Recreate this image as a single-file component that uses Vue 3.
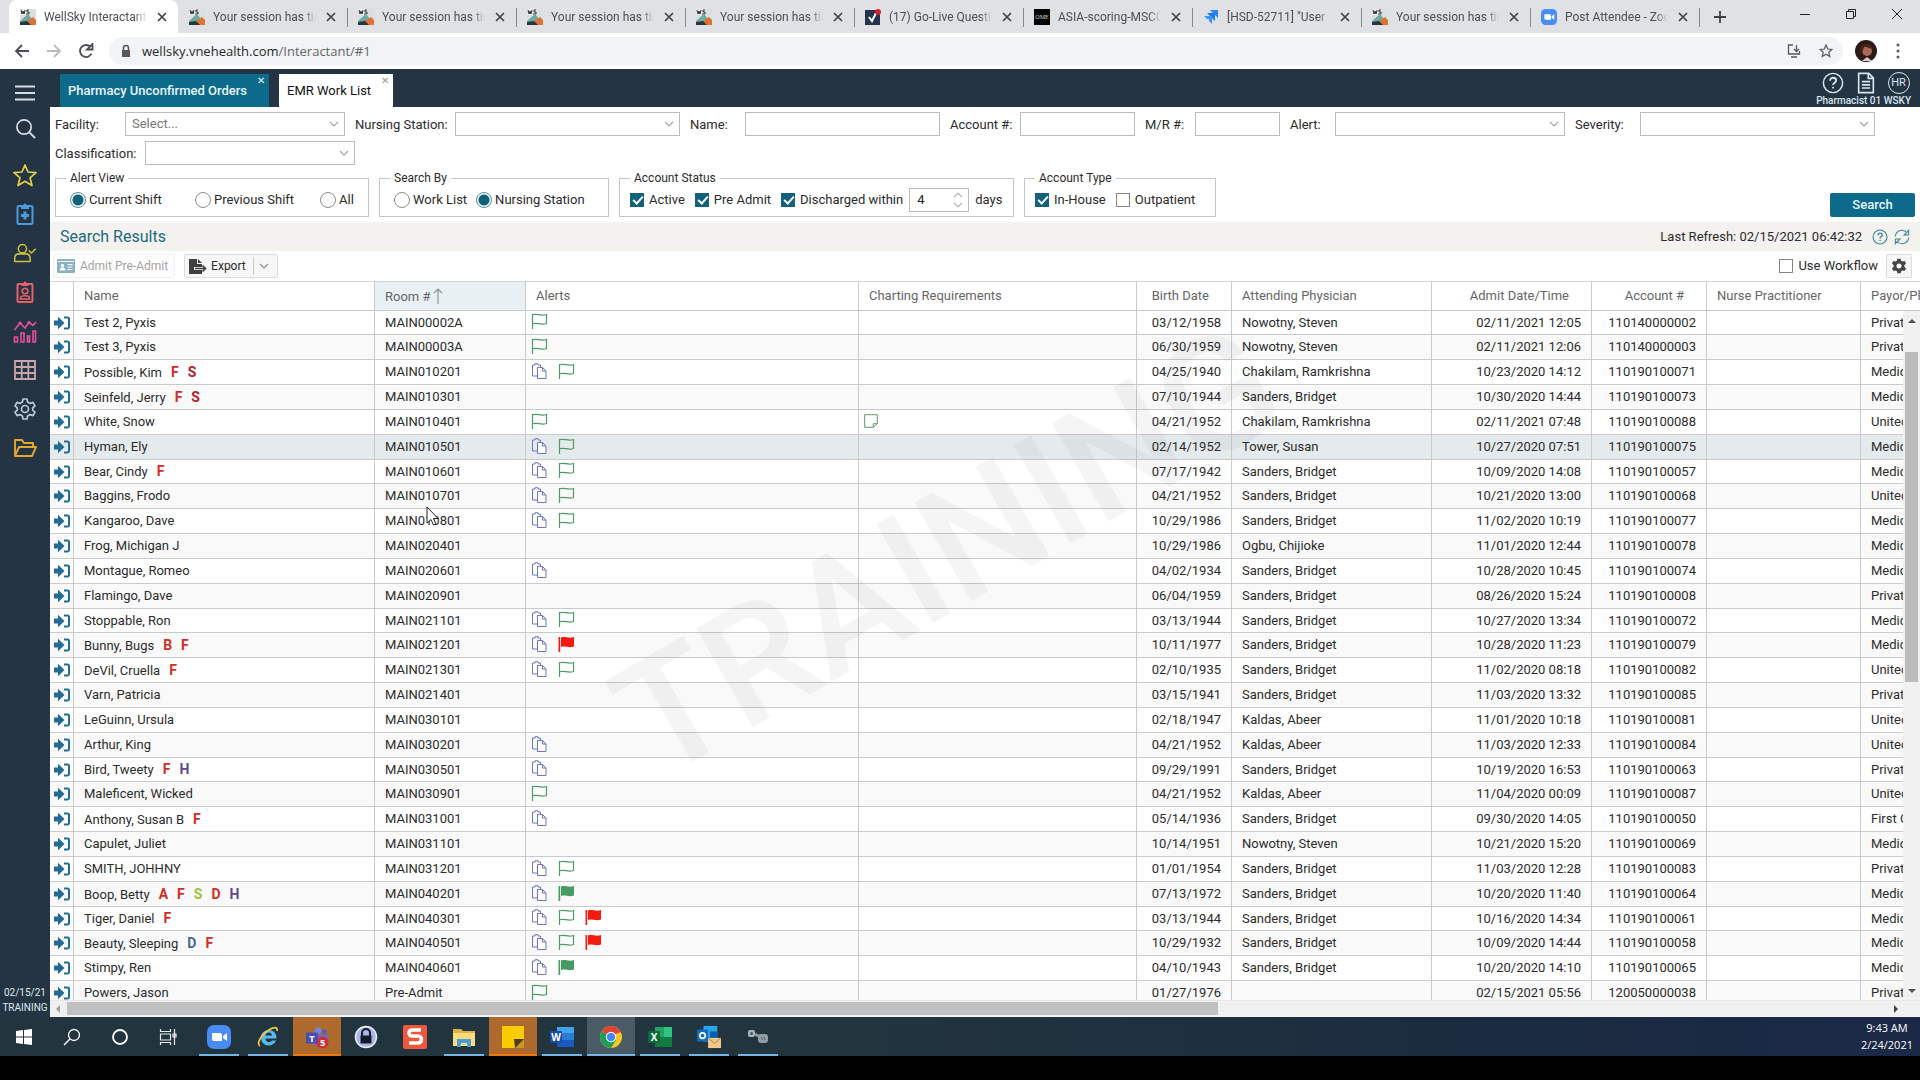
<script setup>
import { ref } from 'vue'

const browserTabs = [
  { icon: 'wellsky', title: 'WellSky Interactant' },
  { icon: 'wellsky', title: 'Your session has timed out' },
  { icon: 'wellsky', title: 'Your session has timed out' },
  { icon: 'wellsky', title: 'Your session has timed out' },
  { icon: 'wellsky', title: 'Your session has timed out' },
  { icon: 'golive', title: '(17) Go-Live Questions' },
  { icon: 'ome', title: 'ASIA-scoring-MSCOE' },
  { icon: 'jira', title: '[HSD-52711] "User' },
  { icon: 'wellsky', title: 'Your session has timed out' },
  { icon: 'zoom', title: 'Post Attendee - Zoom' },
]

const navItems = [
  { icon: 'star', label: 'Favorites', tone: 'yellow' },
  { icon: 'clipboard', label: 'Orders', tone: 'blue' },
  { icon: 'person', label: 'Patients', tone: 'olive' },
  { icon: 'badge', label: 'Census', tone: 'red' },
  { icon: 'chart', label: 'Reports', tone: 'pink' },
  { icon: 'grid', label: 'Grid', tone: 'rose' },
  { icon: 'gear', label: 'Settings', tone: 'pale' },
  { icon: 'folder', label: 'Files', tone: 'orange' },
]

const alertView = ref('Current Shift')
const searchBy = ref('Nursing Station')
const active = ref(true)
const preAdmit = ref(true)
const discharged = ref(true)
const days = ref(4)
const inHouse = ref(true)
const outpatient = ref(false)
const workflow = ref(false)

// name, marker letters with tone, room, alert icons, birth date, physician, admitted, account, payor
const rows = [
  ['Test 2, Pyxis', '', 'MAIN00002A', 'f', '03/12/1958', 'Nowotny, Steven', '02/11/2021 12:05', '110140000002', 'Private'],
  ['Test 3, Pyxis', '', 'MAIN00003A', 'f', '06/30/1959', 'Nowotny, Steven', '02/11/2021 12:06', '110140000003', 'Private'],
  ['Possible, Kim', 'Fr Sc', 'MAIN010201', 'cf', '04/25/1940', 'Chakilam, Ramkrishna', '10/23/2020 14:12', '110190100071', 'Medicare'],
  ['Seinfeld, Jerry', 'Fr Sc', 'MAIN010301', '', '07/10/1944', 'Sanders, Bridget', '10/30/2020 14:44', '110190100073', 'Medicare'],
  ['White, Snow', '', 'MAIN010401', 'f', '04/21/1952', 'Chakilam, Ramkrishna', '02/11/2021 07:48', '110190100088', 'United'],
  ['Hyman, Ely', '', 'MAIN010501', 'cf', '02/14/1952', 'Tower, Susan', '10/27/2020 07:51', '110190100075', 'Medicare'],
  ['Bear, Cindy', 'Fr', 'MAIN010601', 'cf', '07/17/1942', 'Sanders, Bridget', '10/09/2020 14:08', '110190100057', 'Medicare'],
  ['Baggins, Frodo', '', 'MAIN010701', 'cf', '04/21/1952', 'Sanders, Bridget', '10/21/2020 13:00', '110190100068', 'United'],
  ['Kangaroo, Dave', '', 'MAIN010801', 'cf', '10/29/1986', 'Sanders, Bridget', '11/02/2020 10:19', '110190100077', 'Medicare'],
  ['Frog, Michigan J', '', 'MAIN020401', '', '10/29/1986', 'Ogbu, Chijioke', '11/01/2020 12:44', '110190100078', 'Medicare'],
  ['Montague, Romeo', '', 'MAIN020601', 'c', '04/02/1934', 'Sanders, Bridget', '10/28/2020 10:45', '110190100074', 'Medicare'],
  ['Flamingo, Dave', '', 'MAIN020901', '', '06/04/1959', 'Sanders, Bridget', '08/26/2020 15:24', '110190100008', 'Private'],
  ['Stoppable, Ron', '', 'MAIN021101', 'cf', '03/13/1944', 'Sanders, Bridget', '10/27/2020 13:34', '110190100072', 'Medicare'],
  ['Bunny, Bugs', 'Br Fr', 'MAIN021201', 'cr', '10/11/1977', 'Sanders, Bridget', '10/28/2020 11:23', '110190100079', 'Medicare'],
  ['DeVil, Cruella', 'Fr', 'MAIN021301', 'cf', '02/10/1935', 'Sanders, Bridget', '11/02/2020 08:18', '110190100082', 'United'],
  ['Varn, Patricia', '', 'MAIN021401', '', '03/15/1941', 'Sanders, Bridget', '11/03/2020 13:32', '110190100085', 'Private'],
  ['LeGuinn, Ursula', '', 'MAIN030101', '', '02/18/1947', 'Kaldas, Abeer', '11/01/2020 10:18', '110190100081', 'United'],
  ['Arthur, King', '', 'MAIN030201', 'c', '04/21/1952', 'Kaldas, Abeer', '11/03/2020 12:33', '110190100084', 'United'],
  ['Bird, Tweety', 'Fr Hp', 'MAIN030501', 'c', '09/29/1991', 'Sanders, Bridget', '10/19/2020 16:53', '110190100063', 'Private'],
  ['Maleficent, Wicked', '', 'MAIN030901', 'f', '04/21/1952', 'Kaldas, Abeer', '11/04/2020 00:09', '110190100087', 'United'],
  ['Anthony, Susan B', 'Fr', 'MAIN031001', 'c', '05/14/1936', 'Sanders, Bridget', '09/30/2020 14:05', '110190100050', 'First C'],
  ['Capulet, Juliet', '', 'MAIN031101', '', '10/14/1951', 'Nowotny, Steven', '10/21/2020 15:20', '110190100069', 'Medicare'],
  ['SMITH, JOHHNY', '', 'MAIN031201', 'cf', '01/01/1954', 'Sanders, Bridget', '11/03/2020 12:28', '110190100083', 'Private'],
  ['Boop, Betty', 'Ar Fr Sg Dr Hp', 'MAIN040201', 'cg', '07/13/1972', 'Sanders, Bridget', '10/20/2020 11:40', '110190100064', 'Medicare'],
  ['Tiger, Daniel', 'Fr', 'MAIN040301', 'cfr', '03/13/1944', 'Sanders, Bridget', '10/16/2020 14:34', '110190100061', 'Medicare'],
  ['Beauty, Sleeping', 'Db Fr', 'MAIN040501', 'cfr', '10/29/1932', 'Sanders, Bridget', '10/09/2020 14:44', '110190100058', 'Medicare'],
  ['Stimpy, Ren', '', 'MAIN040601', 'cg', '04/10/1943', 'Sanders, Bridget', '10/20/2020 14:10', '110190100065', 'Medicare'],
  ['Powers, Jason', '', 'Pre-Admit', 'f', '01/27/1976', '', '02/15/2021 05:56', '120050000038', 'Private'],
].map(([name, marks, room, alerts, birth, physician, admitted, account, payor]) => ({
  name,
  marks: marks ? marks.split(' ') : [],
  room,
  alerts: [...alerts],
  note: name === 'White, Snow',
  birth,
  physician,
  admitted,
  account,
  payor,
}))

const alertIcons = { c: 'copy', f: 'flag', r: 'flag-red', g: 'flag-green' }

const systemButtons = [
  { icon: 'windows', label: 'Start' },
  { icon: 'find', label: 'Search Windows' },
  { icon: 'cortana', label: 'Cortana' },
  { icon: 'taskview', label: 'Task View' },
]
const taskbarApps = [
  { icon: 'zoom', label: 'Zoom', state: 'open' },
  { icon: 'ie', label: 'Internet Explorer', state: 'open' },
  { icon: 'teams', label: 'Teams', state: 'alerting' },
  { icon: 'lock-app', label: 'Password Vault', state: '' },
  { icon: 'snagit', label: 'Snagit', state: '' },
  { icon: 'explorer', label: 'File Explorer', state: 'open' },
  { icon: 'sticky', label: 'Sticky Notes', state: 'alerting' },
  { icon: 'word', label: 'Word', state: 'open' },
  { icon: 'chrome', label: 'Chrome', state: 'current' },
  { icon: 'excel', label: 'Excel', state: 'open' },
  { icon: 'outlook', label: 'Outlook', state: 'open' },
  { icon: 'audio', label: 'Audio', state: 'open' },
]
</script>

<template>
  <div class="screen">
    <svg class="sprite" aria-hidden="true">
      <symbol id="wellsky" viewBox="0 0 16 16">
        <rect width="16" height="16" fill="#d9e0df" />
        <path d="M0 0h9v6H0z" fill="#e8eae8" />
        <path d="M1 1l1 4 1-3 1 3 1-4M9 1H7v2h2v2H6" fill="none" stroke="#333" />
        <path d="M0 12l8-7 4 5v6H0z" fill="#6fa9a4" />
        <path d="M7 12l6-4 3 3v5H6z" fill="#dd7433" />
        <path d="M0 13l7-1 4 4H0z" fill="#243642" />
      </symbol>
      <symbol id="golive" viewBox="0 0 16 16">
        <path d="M0 1h15v15H0z" fill="#26334f" />
        <path d="M4 8l3 4 4-8" fill="none" stroke="#fff" stroke-width="2" />
        <circle cx="13" cy="3" r="3" fill="#d5202b" />
      </symbol>
      <symbol id="ome" viewBox="0 0 16 16">
        <rect width="16" height="16" fill="#000" />
        <text x="8" y="10" font-size="6" fill="#ddd" text-anchor="middle" font-family="Liberation Serif, serif">OME</text>
      </symbol>
      <symbol id="jira" viewBox="0 0 16 16">
        <path d="M7 1h8v8l-3-3V4H10z" fill="#2684ff" />
        <path d="M4 4h8v8L9 9V7H7z" fill="#1f78f0" />
        <path d="M1 7h8v8l-3-3v-2H4z" fill="#3d93ff" />
      </symbol>
      <symbol id="zoom" viewBox="0 0 24 24">
        <rect width="24" height="24" rx="7" fill="#4a8cf7" />
        <path d="M5 8h8a2 2 0 0 1 2 2v6H7a2 2 0 0 1-2-2zM16 11l4-3v8l-4-3z" fill="#fff" />
      </symbol>
      <symbol id="star" viewBox="0 0 24 24">
        <path d="M12 2l3 7 8 .6-6 5.2 2 7.7-7-4.200-7 4.200 2-7.700L1 9.600 9 9z" fill="none" stroke="currentColor" stroke-width="1.700" stroke-linejoin="round" />
      </symbol>
      <symbol id="clipboard" viewBox="0 0 24 24">
        <rect x="4.500" y="4" width="15" height="18" rx="1.500" fill="none" stroke="currentColor" stroke-width="2" />
        <path d="M8 3h2.500a1.500 1.500 0 0 1 3 0H16v4H8z" fill="currentColor" />
        <path d="M12 9.500v8M8 13.500h8" stroke="currentColor" stroke-width="3" />
      </symbol>
      <symbol id="person" viewBox="0 0 28 24">
        <circle cx="11" cy="7" r="4.800" fill="none" stroke="currentColor" stroke-width="1.800" />
        <path d="M2 22v-4c0-3 2-5 5-5h8c3 0 5 2 5 5v4zM18.500 9l3 3 5-5" fill="none" stroke="currentColor" stroke-width="1.800" stroke-linejoin="round" />
      </symbol>
      <symbol id="badge" viewBox="0 0 24 24">
        <rect x="4.500" y="4" width="15" height="18" rx="1" fill="none" stroke="currentColor" stroke-width="2" />
        <path d="M8.500 3h2a1.500 1.500 0 0 1 3 0h2v3h-7z" fill="currentColor" />
        <circle cx="12" cy="11" r="2.800" fill="none" stroke="currentColor" stroke-width="1.600" />
        <path d="M7.500 19v-1c0-3 9-3 9 0v1z" fill="none" stroke="currentColor" stroke-width="1.600" />
      </symbol>
      <symbol id="chart" viewBox="0 0 24 24">
        <path d="M1.500 11L7 4l5 5 4-5.500 4 3L23 3" fill="none" stroke="currentColor" stroke-width="1.600" />
        <path d="M1.500 18h3v5h-3zM8 14h3v9H8zM14.500 17h2v6h-2zM20 12h2.500v11H20z" fill="none" stroke="currentColor" stroke-width="1.600" />
        <circle cx="7" cy="4" r="1.600" fill="currentColor" /><circle cx="16" cy="3.500" r="1.600" fill="currentColor" />
      </symbol>
      <symbol id="grid" viewBox="0 0 24 24">
        <path d="M2 3h20v18H2zM2 9h20M2 15h20M8.700 3v18M15.300 3v18" fill="none" stroke="currentColor" stroke-width="1.800" />
      </symbol>
      <symbol id="gear" viewBox="0 0 24 24">
        <path d="M10 2h4l.6 3 2.500 1.400 2.900-1 2 3.500-2.300 2v2.200l2.300 2-2 3.500-2.900-1L14.600 19l-.6 3h-4l-.6-3-2.500-1.400-2.900 1-2-3.500 2.300-2v-2.200l-2.300-2 2-3.500 2.900 1L9.400 5z" fill="none" stroke="currentColor" stroke-width="1.700" stroke-linejoin="round" />
        <circle cx="12" cy="12" r="3.500" fill="none" stroke="currentColor" stroke-width="1.700" />
      </symbol>
      <symbol id="folder" viewBox="0 0 24 24">
        <path d="M2 20V4h7l2 3h9v4M2 20l4-9h17l-4 9z" fill="none" stroke="currentColor" stroke-width="1.900" stroke-linejoin="round" />
      </symbol>
      <symbol id="gear-solid" viewBox="0 0 24 24">
        <path fill-rule="evenodd" d="M9.500 1h5l.6 3.200 2 1.200 3.200-1 2.300 4L20 10.700v2.600l2.600 2.300-2.300 4-3.200-1-2 1.200-.6 3.200h-5l-.6-3.200-2-1.200-3.200 1-2.300-4L4 13.300v-2.600L1.400 8.400l2.300-4 3.200 1 2-1.200zM12 8.200a3.800 3.800 0 1 0 0 7.600 3.800 3.800 0 0 0 0-7.600z" fill="currentColor" />
      </symbol>
      <symbol id="help" viewBox="0 0 24 24">
        <circle cx="12" cy="12" r="10.500" fill="none" stroke="currentColor" stroke-width="1.600" />
        <path d="M8.800 9.500c0-4.500 6.600-4 6.600-.3 0 2.600-3.300 2.500-3.300 5M12.100 16v2" fill="none" stroke="currentColor" stroke-width="2" />
      </symbol>
      <symbol id="document" viewBox="0 0 20 24">
        <path d="M2 1.500h11l5 5v16H2zM12.500 1.500V7H18M5.500 10.500h9M5.500 14h9M5.500 17.500h9" fill="none" stroke="currentColor" stroke-width="1.800" />
      </symbol>
      <symbol id="refresh" viewBox="0 0 24 24">
        <path d="M2 11a10 10 0 0 1 18-5M22 13a10 10 0 0 1-18 5M22 2v7h-7zM2 22v-7h7z" fill="none" stroke="currentColor" stroke-width="1.600" />
      </symbol>
      <symbol id="chevron" viewBox="0 0 10 10">
        <path d="M1 3l4 4 4-4" fill="none" stroke="currentColor" stroke-width="1.200" />
      </symbol>
      <symbol id="card" viewBox="0 0 18 14">
        <rect width="18" height="14" rx="1" fill="currentColor" />
        <path d="M1 2.500h16M3 11c0-3 5-3 5 0zM10.500 5.500h5M10.500 8h5M10.500 10.500h5" stroke="#fff" fill="#fff" />
        <circle cx="5.500" cy="6.500" r="1.700" fill="#fff" />
      </symbol>
      <symbol id="export" viewBox="0 0 19 17">
        <path d="M1 1h8v5h5v3H6v3h8v4H1zM10 1l4 4h-4z" fill="currentColor" />
        <path d="M7 10.500h10M14.500 7.500l3 3-3 3" fill="none" stroke="currentColor" stroke-width="1.700" />
      </symbol>
      <symbol id="enter" viewBox="0 0 16 14">
        <path d="M0 4.500h4V.800L10.500 7 4 13.200V9.500H0z" fill="currentColor" />
        <path d="M10 1.500h3.500a1.500 1.500 0 0 1 1.500 1.500v8a1.500 1.500 0 0 1-1.500 1.500H10" fill="none" stroke="currentColor" stroke-width="2" />
      </symbol>
      <symbol id="copy" viewBox="0 0 16 16">
        <path d="M5.500 13H1V2h2.500V.700H6.500V2H9v2" fill="none" stroke="#6f76c0" />
        <path d="M6 4.500h5l3.500 3.500v7.500H6zM11 4.500V8h3.500" fill="#fff" stroke="#6f76c0" />
      </symbol>
      <symbol id="flag" viewBox="0 0 17 16">
        <path d="M1.500 1v15M1.500 1.800c5-2 8 2 14-.3v9c-6 2.300-9-1.700-14 .3" fill="none" stroke="#4f9a68" stroke-width="1.200" />
      </symbol>
      <symbol id="flag-red" viewBox="0 0 17 16">
        <path d="M3 1.500c4-1.500 8 1.500 13-.5v9.500c-5 2-9-1-13 .5zM.500 1h1.700v15H.500z" fill="#f31b10" />
      </symbol>
      <symbol id="flag-green" viewBox="0 0 17 16">
        <path d="M3 1.500c4-1.500 8 1.500 13-.5v9.500c-5 2-9-1-13 .5zM.500 1h1.700v15H.500z" fill="#489c63" />
      </symbol>
      <symbol id="note" viewBox="0 0 14 14">
        <path d="M.700.700h12.600v9l-4 3.600H.700zM9.300 13.300V9.700h4" fill="none" stroke="#5f9573" />
      </symbol>
      <symbol id="windows" viewBox="0 0 20 20">
        <path d="M2 4l7-1v6.500H2zM10 2.900L18 2v7.500h-8zM2 10.500h7V17l-7-1zM10 10.500h8V18l-8-1z" fill="#fff" />
      </symbol>
      <symbol id="find" viewBox="0 0 20 20">
        <circle cx="12" cy="8" r="5.500" fill="none" stroke="#fff" stroke-width="1.300" />
        <path d="M8 12l-6 6" stroke="#fff" stroke-width="1.400" />
      </symbol>
      <symbol id="cortana" viewBox="0 0 20 20">
        <circle cx="10" cy="10" r="7" fill="none" stroke="#fff" stroke-width="1.800" />
      </symbol>
      <symbol id="taskview" viewBox="0 0 20 20">
        <path d="M2.500 2v2.500h10V2M2.500 18v-2.500h10V18M2.500 7h10v6h-10zM16.500 2v16M15 7h3v3h-3z" fill="none" stroke="#e6eaec" stroke-width="1.200" />
      </symbol>
      <symbol id="ie" viewBox="0 0 24 24">
        <path d="M20.500 13.500H9.500c.3 4.500 5 4.500 6.500 2h4.300C16.500 23 5 22 5 12.500 5 2.500 21 2 20.500 13.500zM9.500 10.500h6.700c-.8-4-6-4-6.700 0z" fill="#55b9ee" />
        <path d="M4 21c-4-2 1-11 8-15.500C17 2 22 1 21 6" fill="none" stroke="#f0c63f" stroke-width="1.800" />
      </symbol>
      <symbol id="teams" viewBox="0 0 26 26">
        <circle cx="14" cy="6" r="3.500" fill="#7b83eb" /><circle cx="21" cy="7" r="2.500" fill="#5059c9" />
        <path d="M9 10h10v12H9zM19 10h6v9h-6z" fill="#6d6bc8" />
        <rect x="1" y="8" width="13" height="12" rx="1" fill="#4750ae" />
        <text x="7.500" y="18" font-size="10" font-weight="700" fill="#fff" text-anchor="middle" font-family="Open Sans, sans-serif">T</text>
        <circle cx="19" cy="19" r="6.500" fill="#c9303c" />
        <text x="19" y="23" font-size="10" font-weight="700" fill="#fff" text-anchor="middle" font-family="Open Sans, sans-serif">5</text>
      </symbol>
      <symbol id="lock-app" viewBox="0 0 24 24">
        <circle cx="12" cy="12" r="10.500" fill="#a9b6e6" stroke="#e7ebfa" stroke-width="1.500" />
        <path d="M8 11V8a4 4 0 0 1 8 0v3" fill="none" stroke="#141c2c" stroke-width="2" />
        <rect x="6.500" y="10.500" width="11" height="8" fill="#141c2c" />
      </symbol>
      <symbol id="snagit" viewBox="0 0 24 24">
        <rect width="24" height="24" rx="2" fill="#f0573f" />
        <path d="M18 5H9a2.500 2.500 0 0 0 0 6h6a3.500 3.500 0 0 1 0 7H6" fill="none" stroke="#fff" stroke-width="3.600" />
      </symbol>
      <symbol id="explorer" viewBox="0 0 24 24">
        <path d="M1 4h8l2 2h12v15H1z" fill="#e0b04b" /><path d="M1 8h22v13H1z" fill="#fadb7e" />
        <path d="M5 14h14v8h-4v-4H9v4H5z" fill="#4b9bd2" />
      </symbol>
      <symbol id="sticky" viewBox="0 0 24 24">
        <path d="M1 1h22v13l-9 9H1z" fill="#fbcb02" /><path d="M23 14v9h-9z" fill="#c9952a" /><path d="M13 14h10l-9 9z" fill="#4c3d1c" />
      </symbol>
      <symbol id="word" viewBox="0 0 24 24">
        <path d="M7 2h17v7H7z" fill="#41a5ee" /><path d="M7 8h17v7H7z" fill="#2b7cd3" /><path d="M7 15h17v7H7z" fill="#185abd" />
        <rect y="6" width="12" height="12" rx="1" fill="#1a4c9f" />
        <text x="6" y="16" font-size="10" font-weight="700" fill="#fff" text-anchor="middle" font-family="Open Sans, sans-serif">W</text>
      </symbol>
      <symbol id="excel" viewBox="0 0 24 24">
        <path d="M7 2h9v10H7z" fill="#21a366" /><path d="M16 2h8v10h-8z" fill="#33c481" /><path d="M7 12h17v10H7z" fill="#107c41" />
        <rect y="6" width="12" height="12" rx="1" fill="#0f6a39" />
        <text x="6" y="16" font-size="10" font-weight="700" fill="#fff" text-anchor="middle" font-family="Open Sans, sans-serif">X</text>
      </symbol>
      <symbol id="outlook" viewBox="0 0 26 26">
        <path d="M7 1h15v17H7z" fill="#28a8ea" /><path d="M14 7h8v7h-8z" fill="#0a5dab" />
        <rect y="5" width="12" height="13" rx="1" fill="#0f6cbd" />
        <circle cx="6" cy="11.500" r="3" fill="none" stroke="#fff" stroke-width="1.800" />
        <path d="M12 14h14v11H12z" fill="#f0c98b" /><path d="M12 14l7 6 7-6" fill="none" stroke="#a87b3d" />
      </symbol>
      <symbol id="chrome" viewBox="0 0 24 24">
        <circle cx="12" cy="12" r="11" fill="#f9c825" />
        <path d="M12 12L2.500 6.500A11 11 0 0 1 21.500 6.500z" fill="#dc4437" />
        <path d="M12 12L2.500 6.500A11 11 0 0 0 12 23l5-8z" fill="#1b9e58" />
        <path d="M12 7h9.900" stroke="#dc4437" stroke-width="1" />
        <circle cx="12" cy="12" r="5.200" fill="#fff" /><circle cx="12" cy="12" r="4.200" fill="#4587f2" />
      </symbol>
      <symbol id="audio" viewBox="0 0 24 24">
        <rect x="2" y="5" width="7" height="7" rx="2" fill="#aab4bb" /><path d="M9 9l5 3" stroke="#8c979e" stroke-width="3" />
        <rect x="12" y="9" width="10" height="9" rx="3" fill="#929ca4" /><circle cx="5.500" cy="8.500" r="1.500" fill="#4c5a64" />
        <path d="M15 12l2 3M18 12l1 3" stroke="#5c6870" />
      </symbol>
    </svg>

    <header class="browser">
      <div class="tab-strip">
        <div v-for="(tab, i) in browserTabs" :key="i" class="browser-tab" :class="{ selected: i === 0, plain: i > 0 }">
          <svg class="favicon"><use :href="'#' + tab.icon" /></svg>
          <span class="tab-title">{{ tab.title }}</span>
          <button class="tab-close" aria-label="Close tab">
            <svg viewBox="0 0 10 10"><path d="M1 1l8 8M9 1L1 9" stroke="#3f4347" stroke-width="1.700" /></svg>
          </button>
        </div>
        <button class="new-tab" aria-label="New tab">
          <svg viewBox="0 0 12 12"><path d="M6 0v12M0 6h12" stroke="#3c4043" stroke-width="1.800" /></svg>
        </button>
        <div class="window-buttons">
          <button aria-label="Minimize"><svg viewBox="0 0 12 12"><path d="M1 6.500h10" stroke="#222" /></svg></button>
          <button aria-label="Restore"><svg viewBox="0 0 12 12"><path d="M1.500 3.500h7v7h-7zM3.500 3V1.500h7v7H9" fill="none" stroke="#222" /></svg></button>
          <button aria-label="Close"><svg viewBox="0 0 12 12"><path d="M1 1l10 10M11 1L1 11" stroke="#222" /></svg></button>
        </div>
      </div>
      <div class="address-row">
        <button class="nav-button" aria-label="Back"><svg viewBox="0 0 16 16"><path d="M15 8H2M8 2L2 8l6 6" fill="none" stroke="#4a4d51" stroke-width="1.800" /></svg></button>
        <button class="nav-button" aria-label="Forward"><svg viewBox="0 0 16 16"><path d="M1 8h13M8 2l6 6-6 6" fill="none" stroke="#b9bcbf" stroke-width="1.800" /></svg></button>
        <button class="nav-button" aria-label="Reload"><svg viewBox="0 0 16 16"><path d="M13.500 10.500A6 6 0 1 1 12.500 4M14.500 1v5.500H9z" fill="none" stroke="#4a4d51" stroke-width="1.800" /></svg></button>
        <div class="omnibox">
          <svg class="lock" viewBox="0 0 10 14"><path d="M2.500 6V4a2.500 2.500 0 0 1 5 0v2" fill="none" stroke="#55585c" stroke-width="1.500" /><rect x="1" y="6" width="8" height="7" fill="#55585c" /></svg>
          <span class="url">wellsky.vnehealth.com<span class="path">/Interactant/#1</span></span>
          <svg class="omni-icon" viewBox="0 0 14 14"><path d="M6 1H1.500v9h11V7M4 13h6M9.500 1v6M7 5l2.500 2.500L12 5" fill="none" stroke="#55585c" stroke-width="1.300" /></svg>
          <svg class="omni-icon" viewBox="0 0 14 14"><path d="M7 1l1.800 4 4.200.4-3.200 2.800 1 4.300L7 10.300l-3.800 2.200 1-4.300L1 5.400 5.200 5z" fill="none" stroke="#55585c" stroke-width="1.200" /></svg>
        </div>
        <svg class="avatar" viewBox="0 0 22 22"><circle cx="11" cy="11" r="11" fill="#2c1a17" /><circle cx="12" cy="11" r="5" fill="#a5695a" /><path d="M5 9c1-7 12-7 13 0-4 0-7-3-9-2l-2 6z" fill="#46231b" /><path d="M7 21l5-4 5 4z" fill="#d3cfd0" /></svg>
        <button class="more" aria-label="Menu"><svg viewBox="0 0 4 16"><circle cx="2" cy="2" r="1.500" /><circle cx="2" cy="8" r="1.500" /><circle cx="2" cy="14" r="1.500" /></svg></button>
      </div>
    </header>

    <div class="app">
      <nav class="sidebar">
        <button class="menu-button" aria-label="Menu"><svg viewBox="0 0 20 16"><path d="M0 1.500h20M0 8h20M0 14.500h20" stroke="#d3dde6" stroke-width="2" /></svg></button>
        <button class="side-search" aria-label="Search"><svg viewBox="0 0 22 22"><circle cx="9.500" cy="9.500" r="7.500" fill="none" stroke="#d3dde6" stroke-width="1.800" /><path d="M15 15l6 6" stroke="#d3dde6" stroke-width="2" /></svg></button>
        <button v-for="item in navItems" :key="item.icon" :class="['side-item', item.tone]" :aria-label="item.label">
          <svg><use :href="'#' + item.icon" /></svg>
        </button>
        <div class="environment"><span>02/15/21</span><span>TRAINING</span></div>
      </nav>

      <main class="workspace">
        <div class="app-bar">
          <div class="app-tabs">
            <div class="app-tab"><span>Pharmacy Unconfirmed Orders</span><button aria-label="Close Pharmacy Unconfirmed Orders">✕</button></div>
            <div class="app-tab front"><span>EMR Work List</span><button aria-label="Close EMR Work List">✕</button></div>
          </div>
          <div class="account">
            <div class="account-icons">
              <svg><use href="#help" /></svg>
              <svg><use href="#document" /></svg>
              <span class="initials">HR</span>
            </div>
            <span class="user">Pharmacist 01 WSKY</span>
          </div>
        </div>

        <form class="filters" @submit.prevent>
          <div class="criteria">
            <div class="field facility"><label for="facility">Facility:</label><span class="select"><select id="facility"><option>Select...</option></select><svg><use href="#chevron" /></svg></span></div>
            <div class="field station"><label for="station">Nursing Station:</label><span class="select"><select id="station"><option></option></select><svg><use href="#chevron" /></svg></span></div>
            <div class="field name"><label for="name">Name:</label><input id="name" type="text" /></div>
            <div class="field account-no"><label for="account">Account #:</label><input id="account" type="text" /></div>
            <div class="field record"><label for="record">M/R #:</label><input id="record" type="text" /></div>
            <div class="field alert"><label for="alert">Alert:</label><span class="select"><select id="alert"><option></option></select><svg><use href="#chevron" /></svg></span></div>
            <div class="field severity"><label for="severity">Severity:</label><span class="select"><select id="severity"><option></option></select><svg><use href="#chevron" /></svg></span></div>
            <div class="field classification"><label for="classification">Classification:</label><span class="select"><select id="classification"><option></option></select><svg><use href="#chevron" /></svg></span></div>
          </div>

          <div class="groups">
            <fieldset class="alert-view">
              <legend>Alert View</legend>
              <label v-for="v in ['Current Shift', 'Previous Shift', 'All']" :key="v"><input v-model="alertView" type="radio" name="view" :value="v" />{{ v }}</label>
            </fieldset>
            <fieldset class="search-by">
              <legend>Search By</legend>
              <label v-for="v in ['Work List', 'Nursing Station']" :key="v"><input v-model="searchBy" type="radio" name="by" :value="v" />{{ v }}</label>
            </fieldset>
            <fieldset class="status">
              <legend>Account Status</legend>
              <label><input v-model="active" type="checkbox" />Active</label>
              <label><input v-model="preAdmit" type="checkbox" />Pre Admit</label>
              <label><input v-model="discharged" type="checkbox" />Discharged within</label>
              <span class="spinner">
                <input id="days" v-model="days" type="number" />
                <svg viewBox="0 0 10 16"><path d="M1 5l4-4 4 4M1 11l4 4 4-4" fill="none" stroke="#b5b5b5" stroke-width="1.200" /></svg>
              </span>
              <label class="unit" for="days">days</label>
            </fieldset>
            <fieldset class="type">
              <legend>Account Type</legend>
              <label><input v-model="inHouse" type="checkbox" />In-House</label>
              <label><input v-model="outpatient" type="checkbox" />Outpatient</label>
            </fieldset>
            <button class="search-button" type="submit">Search</button>
          </div>
        </form>

        <div class="results-bar">
          <h2>Search Results</h2>
          <span class="refreshed">Last Refresh: 02/15/2021 06:42:32</span>
          <svg><use href="#help" /></svg>
          <svg><use href="#refresh" /></svg>
        </div>

        <div class="toolbar">
          <button class="tool admit" disabled><svg><use href="#card" /></svg>Admit Pre-Admit</button>
          <button class="tool export"><svg><use href="#export" /></svg>Export<span class="split"><svg><use href="#chevron" /></svg></span></button>
          <label class="workflow"><input v-model="workflow" type="checkbox" />Use Workflow</label>
          <button class="tool settings" aria-label="Grid settings"><svg><use href="#gear-solid" /></svg></button>
        </div>

        <div class="grid">
          <table>
            <colgroup>
              <col class="w-open" /><col class="w-name" /><col class="w-room" /><col class="w-alerts" /><col class="w-charting" />
              <col class="w-birth" /><col class="w-physician" /><col class="w-admit" /><col class="w-account" /><col class="w-nurse" /><col />
            </colgroup>
            <thead>
              <tr>
                <th></th><th>Name</th>
                <th class="sorted">Room #<svg viewBox="0 0 10 16"><path d="M5 16V1M1 5l4-4 4 4" fill="none" stroke="#8c979c" stroke-width="1.200" /></svg></th>
                <th>Alerts</th><th>Charting Requirements</th><th class="right">Birth Date</th><th>Attending Physician</th>
                <th class="right">Admit Date/Time</th><th class="right">Account #</th><th>Nurse Practitioner</th><th>Payor/Plan</th>
              </tr>
            </thead>
            <tbody>
              <tr v-for="row in rows" :key="row.account" :class="{ hovered: row.name === 'Hyman, Ely' }">
                <td class="open"><svg><use href="#enter" /></svg></td>
                <td>{{ row.name }}<b v-for="mark in row.marks" :key="mark" :class="['mark', 'mark-' + mark[1]]">{{ mark[0] }}</b></td>
                <td>{{ row.room }}</td>
                <td class="icons"><div><svg v-for="a in row.alerts" :key="a"><use :href="'#' + alertIcons[a]" /></svg></div></td>
                <td class="icons"><div v-if="row.note"><svg class="note"><use href="#note" /></svg></div></td>
                <td class="right">{{ row.birth }}</td>
                <td>{{ row.physician }}</td>
                <td class="right">{{ row.admitted }}</td>
                <td class="right">{{ row.account }}</td>
                <td></td>
                <td>{{ row.payor }}</td>
              </tr>
            </tbody>
          </table>
          <div class="v-scroll"><i class="arrow up"></i><div class="thumb"></div><i class="arrow down"></i></div>
        </div>
        <div class="h-scroll"><i class="arrow left"></i><div class="thumb"></div><i class="arrow right-arrow"></i></div>

        <span class="watermark">TRAINING</span>
        <svg class="cursor" viewBox="0 0 13 20"><path d="M1 1v16l4-3.500 2.500 5.500 2.500-1-2.500-5.500H12z" fill="#fff" stroke="#222" /></svg>
      </main>
    </div>

    <footer class="taskbar">
      <button v-for="b in systemButtons" :key="b.icon" class="system" :aria-label="b.label"><svg><use :href="'#' + b.icon" /></svg></button>
      <div class="running">
        <button v-for="a in taskbarApps" :key="a.icon" :class="['task', a.state]" :aria-label="a.label"><svg><use :href="'#' + a.icon" /></svg></button>
      </div>
      <div class="clock"><span>9:43 AM</span><span>2/24/2021</span></div>
    </footer>
  </div>
</template>

<style>
body {
  margin: 0;
  background: #000;
}
</style>

<style scoped>
* {
  box-sizing: border-box;
}
.screen {
  display: flex;
  flex-direction: column;
  height: 100vh;
  padding-bottom: 24px;
  overflow: hidden;
  font: 13px/16px Roboto, "Liberation Sans", sans-serif;
  color: #2b2b2b;
}
button {
  display: flex;
  align-items: center;
  justify-content: center;
  padding: 0;
  border: 0;
  background: none;
  font: inherit;
  color: inherit;
}
svg {
  flex: none;
  display: block;
}
svg.sprite {
  display: none;
}

/* browser chrome */
.browser {
  font-family: "Open Sans", "Noto Sans", sans-serif;
  background: #fff;
}
.tab-strip {
  display: flex;
  height: 33px;
  padding-left: 9px;
  background: #dfe1e5;
}
.browser-tab {
  display: flex;
  align-items: center;
  width: 169px;
  padding: 1px 11px 0 11px;
}
.browser-tab.selected {
  border-radius: 8px 8px 0 0;
  background: #fff;
}
.browser-tab.plain + .browser-tab {
  background: linear-gradient(#85888c, #85888c) 0 8px / 1px 19px no-repeat;
}
.favicon {
  width: 16px;
  height: 16px;
}
.tab-title {
  flex: 1;
  margin: 0 10px 0 8px;
  overflow: hidden;
  white-space: nowrap;
  font-family: Roboto, sans-serif;
  font-size: 12px;
  color: #4b4f54;
  mask-image: linear-gradient(90deg, #000 88%, transparent);
}
.tab-close {
  width: 10px;
}
.tab-close svg {
  width: 10px;
  height: 10px;
}
.new-tab {
  width: 42px;
  background: linear-gradient(#85888c, #85888c) 0 8px / 1px 19px no-repeat;
}
.new-tab svg {
  width: 12px;
  height: 12px;
}
.window-buttons {
  display: flex;
  height: 28px;
  margin-left: auto;
}
.window-buttons button {
  width: 46px;
}
.window-buttons svg {
  width: 12px;
  height: 12px;
}
.address-row {
  display: flex;
  align-items: center;
  height: 36px;
  padding: 0 20px 0 6px;
}
.nav-button {
  width: 32px;
}
.nav-button svg {
  width: 16px;
  height: 16px;
}
.omnibox {
  display: flex;
  flex: 1;
  align-items: center;
  height: 28px;
  margin: 0 12px 0 7px;
  padding: 0 10px 0 12px;
  border-radius: 14px;
  background: #f1f3f4;
}
.lock {
  width: 10px;
  height: 14px;
}
.url {
  flex: 1;
  margin-left: 11px;
  font-size: 13px;
  color: #26292c;
}
.path {
  color: #62666a;
}
.omni-icon {
  width: 14px;
  height: 14px;
  margin-left: 18px;
}
.avatar {
  width: 22px;
  height: 22px;
}
.more {
  width: 4px;
  margin-left: 19px;
}
.more svg {
  width: 4px;
  height: 16px;
  fill: #55585c;
}

/* application frame */
.app {
  display: flex;
  flex: 1;
  min-height: 0;
  background: #fff;
}
.sidebar {
  display: flex;
  flex: none;
  flex-direction: column;
  align-items: center;
  width: 50px;
  padding-top: 7px;
  background: #243443;
}
.menu-button {
  height: 34px;
}
.menu-button svg {
  width: 20px;
  height: 16px;
}
.side-search {
  height: 36px;
  margin-bottom: 9px;
}
.side-search svg {
  width: 21px;
  height: 21px;
}
.side-item {
  height: 39px;
}
.side-item svg {
  width: 24px;
  height: 24px;
}
.yellow { color: #e3cf4b; }
.blue { color: #4a9be0; }
.olive { color: #cbbf3f; }
.red { color: #e8616a; }
.pink { color: #e3529f; }
.rose { color: #c9a5ad; }
.pale { color: #b9cbd9; }
.orange { color: #e2a82d; }
.environment {
  display: flex;
  flex-direction: column;
  margin-top: auto;
  padding-bottom: 2px;
  text-align: center;
  font-size: 10px;
  line-height: 15px;
  color: #dfe8ef;
}
.workspace {
  position: relative;
  display: flex;
  flex: 1;
  flex-direction: column;
  min-width: 0;
}
.app-bar {
  display: flex;
  justify-content: space-between;
  height: 38px;
  padding: 0 9px 0 10px;
  background: #243443;
}
.app-tabs {
  display: flex;
  gap: 10px;
  padding-top: 5px;
}
.app-tab {
  display: flex;
  padding: 0 4px 0 8px;
  background: #0d6a8b;
  color: #e6f6fb;
  font-weight: 500;
  line-height: 33px;
}
.app-tab button {
  align-self: flex-start;
  height: 14px;
  margin-left: 10px;
  font-size: 10px;
  line-height: 14px;
}
.app-tab.front {
  background: #fff;
  color: #111;
  font-weight: 400;
}
.app-tab.front button {
  color: #999;
}
.account {
  display: flex;
  flex-direction: column;
  align-items: center;
  padding-top: 3px;
  color: #d8e6f0;
}
.account-icons {
  display: flex;
  gap: 11px;
  margin-left: 4px;
}
.account-icons svg {
  width: 22px;
  height: 22px;
}
.initials {
  width: 22px;
  height: 22px;
  border: 1px solid #d8e6f0;
  border-radius: 50%;
  text-align: center;
  font-size: 11px;
  line-height: 20px;
}
.user {
  font-size: 10px;
  font-weight: 500;
  line-height: 14px;
}

/* filters */
.filters {
  padding: 5px;
}
.criteria {
  display: flex;
  flex-wrap: wrap;
  gap: 5px 10px;
}
.field {
  display: flex;
  align-items: center;
}
.field label {
  flex: 1;
  padding-top: 1px;
}
.field input,
.field select {
  display: block;
  width: 100%;
  height: 24px;
  padding: 0 6px;
  border: 1px solid #bcbcbc;
  border-radius: 0;
  background: #fff;
  font: inherit;
  color: #757575;
  appearance: none;
}
.select {
  position: relative;
}
.select svg {
  position: absolute;
  top: 7px;
  right: 6px;
  width: 10px;
  height: 10px;
  color: #a2a2a2;
  pointer-events: none;
}
.facility { width: 290px; }
.facility .select { width: 220px; }
.station { width: 325px; }
.station .select { width: 225px; }
.name { width: 250px; }
.name input { width: 195px; }
.account-no { width: 185px; }
.account-no input { width: 115px; }
.record { width: 135px; }
.record input { width: 85px; }
.alert { width: 275px; }
.alert .select { width: 230px; }
.severity { width: 300px; }
.severity .select { width: 235px; }
.classification { width: 300px; }
.classification .select { width: 210px; }
.groups {
  display: flex;
  gap: 10px;
  align-items: flex-end;
  margin-top: 5px;
}
fieldset {
  display: flex;
  align-items: center;
  height: 47px;
  margin: 0;
  padding: 0 10px 3px;
  border: 1px solid #c2c6c6;
}
legend {
  height: 16px;
  padding: 0 4px;
  font-size: 12px;
}
fieldset label,
.workflow {
  display: flex;
  align-items: center;
  white-space: nowrap;
}
input[type="radio"] {
  flex: none;
  width: 16px;
  height: 16px;
  margin: 0 3px 0 0;
  border: 1px solid #8c8c8c;
  border-radius: 50%;
  background: #fff;
  appearance: none;
}
input[type="radio"]:checked {
  border-color: #4d8b9d;
  background: radial-gradient(#0f6079 5px, #fff 6px);
}
input[type="checkbox"] {
  flex: none;
  width: 14px;
  height: 14px;
  margin: 0 5px 0 0;
  border: 1px solid #858585;
  background: #fff;
  appearance: none;
}
input[type="checkbox"]:checked {
  border-color: #14617b;
  background: #14617b;
}
input[type="checkbox"]:checked::before {
  content: "";
  display: block;
  width: 4px;
  height: 8px;
  margin-left: 4px;
  border: solid #fff;
  border-width: 0 2px 2px 0;
  transform: rotate(42deg);
}
.alert-view {
  width: 314px;
  padding-left: 14px;
}
.alert-view label {
  width: 125px;
}
.alert-view label:last-child {
  width: auto;
}
.alert-view legend,
.search-by legend {
  margin-left: -4px;
}
.search-by {
  width: 230px;
  gap: 9px;
  padding-left: 14px;
}
.status {
  width: 395px;
  gap: 10px;
}
.spinner {
  position: relative;
  margin-left: -4px;
}
.spinner input {
  display: block;
  width: 60px;
  height: 24px;
  padding: 0 7px;
  border: 1px solid #bcbcbc;
  font: inherit;
  color: #222;
  appearance: textfield;
}
.spinner svg {
  position: absolute;
  top: 4px;
  right: 6px;
  width: 10px;
  height: 16px;
}
.unit {
  margin-left: -4px;
}
.type {
  width: 192px;
  gap: 10px;
}
.search-button {
  width: 85px;
  height: 24px;
  margin-left: auto;
  border-radius: 2px;
  background: #0d6a8b;
  color: #e6f6fb;
  font-weight: 500;
}

/* results */
.results-bar {
  display: flex;
  flex: none;
  align-items: center;
  gap: 6px;
  height: 29px;
  padding: 0 10px;
  background: #f3f2ef;
}
.results-bar h2 {
  flex: 1;
  margin: 0;
  font-size: 16px;
  font-weight: 400;
  color: #226a7f;
}
.refreshed {
  margin-right: 4px;
}
.results-bar svg {
  width: 16px;
  height: 16px;
  color: #3c8798;
}
.toolbar {
  display: flex;
  flex: none;
  align-items: center;
  height: 30px;
  padding: 0 8px 0 3px;
}
.tool {
  height: 24px;
  border: 1px solid #dcdcdc;
  border-radius: 2px;
  background: #f7f7f7;
  font-size: 12px;
}
.admit {
  padding: 0 6px 0 3px;
  border-color: #f0f0f0;
  background: #fdfdfd;
  color: #a5a5a5;
}
.admit svg {
  width: 18px;
  height: 14px;
  margin-right: 5px;
  color: #86b2c3;
}
.export {
  margin-left: 9px;
  padding-left: 3px;
}
.export > svg {
  width: 19px;
  height: 17px;
  margin-right: 4px;
  color: #404040;
}
.split {
  display: flex;
  align-items: center;
  height: 18px;
  margin-left: 7px;
  padding: 0 8px 0 5px;
  border-left: 1px solid #c8c8c8;
}
.split svg {
  width: 10px;
  height: 10px;
  color: #8d8d8d;
}
.workflow {
  margin-left: auto;
}
.settings {
  width: 26px;
  margin-left: 8px;
}
.settings svg {
  width: 16px;
  height: 16px;
  color: #454545;
}
.grid {
  position: relative;
  flex: 1;
  min-height: 0;
  overflow: hidden;
}
table {
  width: 100%;
  table-layout: fixed;
  border-collapse: separate;
  border-spacing: 0;
}
.w-open { width: 24px; }
.w-name { width: 301px; }
.w-room { width: 151px; }
.w-alerts { width: 333px; }
.w-charting { width: 278px; }
.w-birth { width: 95px; }
.w-physician { width: 200px; }
.w-admit { width: 160px; }
.w-account { width: 115px; }
.w-nurse { width: 154px; }
th,
td {
  padding: 0 10px;
  overflow: hidden;
  border-right: 1px solid #c9cbcb;
  border-bottom: 1px solid #c9cbcb;
  text-align: left;
  white-space: nowrap;
}
th:last-child,
td:last-child {
  padding-right: 0;
  border-right: 0;
}
th {
  height: 30px;
  border-top: 1px solid #d3d5d5;
  font-weight: 400;
  color: #666;
}
th svg {
  display: inline-block;
  width: 10px;
  height: 16px;
  margin-left: 3px;
  vertical-align: -3px;
}
.sorted {
  background: #e9f0f4;
}
th.right,
td.right {
  text-align: right;
}
th.right {
  padding-right: 22px;
}
td {
  height: 25px;
  line-height: 16px;
}
tr:nth-child(6n + 1) td {
  height: 24px;
}
tbody tr:nth-child(even) {
  background: #f9f9f9;
}
tbody tr.hovered {
  background: #e5ebed;
}
td.open {
  padding: 0 4px;
}
.open svg {
  width: 16px;
  height: 14px;
  color: #216c94;
}
.mark {
  margin-left: 9px;
  font-size: 14px;
  font-weight: 700;
}
.mark-r { color: #cf2f27; }
.mark-c { color: #b3202a; }
.mark-g { color: #a5bf3f; }
.mark-p { color: #5d4894; }
.mark-b { color: #47698f; }
td.icons {
  padding: 0 5px;
}
.icons div {
  display: flex;
  gap: 10px;
  padding-bottom: 3px;
}
.icons svg {
  width: 17px;
  height: 16px;
}
.icons svg.note {
  width: 14px;
  height: 14px;
}
.v-scroll {
  position: absolute;
  top: 30px;
  right: 0;
  bottom: 0;
  display: flex;
  flex-direction: column;
  align-items: center;
  width: 17px;
  padding: 8px 0 7px;
  background: #f1f1f1;
}
.v-scroll .thumb {
  width: 13px;
  height: 49%;
  margin: 29px 0 auto;
  background: #bcbcbc;
}
.h-scroll {
  display: flex;
  flex: none;
  align-items: center;
  height: 17px;
  padding: 0 22px 0 6px;
  border-top: 1px solid #e6e6e6;
  border-bottom: 1px solid #f5f5f5;
  background: #f0f0f0;
}
.h-scroll .thumb {
  width: 62.5%;
  height: 13px;
  margin: 0 auto 0 7px;
  background: #c0c0c0;
}
.arrow {
  border: 4px solid transparent;
}
.up {
  border-top: 0;
  border-bottom-color: #505050;
}
.down {
  border-bottom: 0;
  border-top-color: #505050;
}
.left {
  border-left: 0;
  border-right-color: #a0a0a0;
}
.right-arrow {
  border-right: 0;
  border-left-color: #404040;
}
.watermark {
  position: absolute;
  top: 51%;
  left: 48%;
  font-size: 160px;
  font-weight: 500;
  line-height: 160px;
  color: rgba(60, 60, 70, 0.05);
  transform: translate(-50%, -50%) rotate(-30deg);
  pointer-events: none;
}
.cursor {
  position: absolute;
  top: 437px;
  left: 376px;
  width: 13px;
  height: 20px;
}

/* taskbar */
.taskbar {
  display: flex;
  flex: none;
  height: 39px;
  padding-right: 7px;
  background: linear-gradient(90deg, #22343e 0%, #22343e 45%, #1b2b40 80%, #1b2947 100%);
  font-family: "Open Sans", "Noto Sans", sans-serif;
}
.system {
  width: 48px;
}
.system svg {
  width: 20px;
  height: 20px;
}
.running {
  display: flex;
  flex: 1;
  gap: 1px;
  margin-left: 3px;
}
.task {
  width: 48px;
}
.task svg {
  width: 24px;
  height: 24px;
}
.task.open {
  background: linear-gradient(#76b4e6, #76b4e6) 50% 100% / 40px 2px no-repeat;
}
.task.current {
  background: linear-gradient(#76b4e6, #76b4e6) 0 100% / 100% 2px no-repeat #4a5b65;
}
.task.alerting {
  background: linear-gradient(#f0770f, #f0770f) 0 100% / 100% 2px no-repeat #ae6a2c;
}
.clock {
  display: flex;
  flex-direction: column;
  justify-content: center;
  padding-bottom: 1px;
  text-align: center;
  font-size: 11px;
  line-height: 17px;
  color: #fff;
}
</style>
